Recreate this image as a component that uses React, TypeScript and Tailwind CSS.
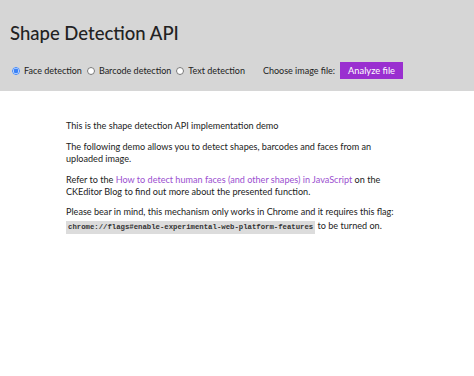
import * as React from 'react'

export default function App() {
  const [mode, setMode] = React.useState('face')
  const modes = [
    {id: 'face', label: 'Face detection'},
    {id: 'barcode', label: 'Barcode detection'},
    {id: 'text', label: 'Text detection'},
  ]

  return (
    <div className="min-h-[376px] bg-white text-[#222] font-['Lato','Open_Sans',sans-serif]">
      <header className="h-[91px] bg-[#d6d6d6] px-[10px] pt-[20px]">
        <h1 className="text-[18.5px] leading-[26px] font-medium">Shape Detection API</h1>
        <div className="mt-[16px] flex items-center text-[9px]">
          {modes.map(m => (
            <label key={m.id} className="mr-[3px] flex items-center">
              <input
                type="radio"
                name="mode"
                checked={mode === m.id}
                onChange={() => setMode(m.id)}
                className="ml-[2px] mr-[4px] h-[8px] w-[8px] accent-[#3b82f6]"
              />
              {m.label}
            </label>
          ))}
          <span className="ml-[15px]">Choose image file:</span>
          <button className="ml-[5px] h-[17px] bg-[#9a2fd0] px-[8px] text-[9.3px] text-white">
            Analyze file
          </button>
        </div>
      </header>

      <main className="mx-auto w-[342px] pt-[29px] text-[9.1px] leading-[12px]">
        <p>This is the shape detection API implementation demo</p>
        <p className="mt-[9px]">
          The following demo allows you to detect shapes, barcodes and faces from an uploaded image.
        </p>
        <p className="mt-[9px]">
          Refer to the{' '}
          <a href="#" className="text-[#9b4fd0]">
            How to detect human faces (and other shapes) in JavaScript
          </a>{' '}
          on the CKEditor Blog to find out more about the presented function.
        </p>
        <p className="mt-[8px]">
          Please bear in mind, this mechanism only works in Chrome and it requires this flag:{' '}
          <code className="inline-block bg-[#dcdcdc] px-[2px] mt-[3px] leading-[13px] font-['Liberation_Mono',monospace] text-[7.3px] font-bold text-[#333]">
            chrome://flags#enable-experimental-web-platform-features
          </code>{' '}
          to be turned on.
        </p>
      </main>
    </div>
  )
}
